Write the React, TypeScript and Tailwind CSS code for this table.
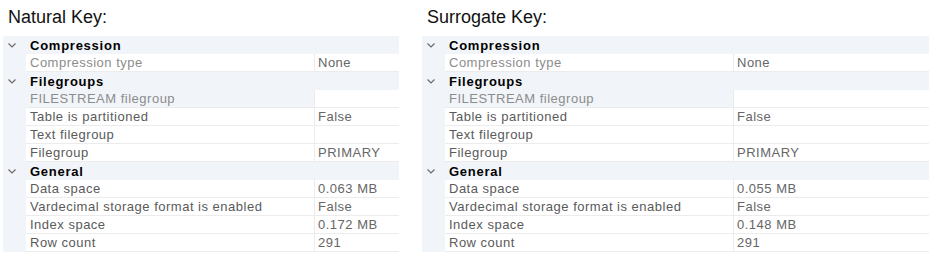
type Prop = { name: string; value?: string; muted?: boolean };
type Category = { title: string; props: Prop[] };

const natural: Category[] = [
  { title: "Compression", props: [{ name: "Compression type", value: "None", muted: true }] },
  {
    title: "Filegroups",
    props: [
      { name: "FILESTREAM filegroup", muted: true },
      { name: "Table is partitioned", value: "False" },
      { name: "Text filegroup" },
      { name: "Filegroup", value: "PRIMARY" },
    ],
  },
  {
    title: "General",
    props: [
      { name: "Data space", value: "0.063 MB" },
      { name: "Vardecimal storage format is enabled", value: "False" },
      { name: "Index space", value: "0.172 MB" },
      { name: "Row count", value: "291" },
    ],
  },
];

const surrogate: Category[] = natural.map((c) => ({
  ...c,
  props: c.props.map((p) =>
    p.name === "Data space"
      ? { ...p, value: "0.055 MB" }
      : p.name === "Index space"
        ? { ...p, value: "0.148 MB" }
        : p
  ),
}));

function Chevron() {
  return (
    <svg width="8" height="5" viewBox="0 0 8 5" className="ml-[5px] mr-[9px] shrink-0">
      <polyline points="0.5,0.5 4,4 7.5,0.5" fill="none" stroke="#6b6b6b" strokeWidth="1.2" />
    </svg>
  );
}

function PropertyGrid({ title, data, width }: { title: string; data: Category[]; width: string }) {
  return (
    <div className={`flex flex-col ${width}`}>
      <div className="h-[33px] pl-[5px] pt-[2px] text-[18px] leading-[24px] text-[#111]">{title}</div>
      <div className="flex flex-col">
        {data.map((cat) => (
          <div key={cat.title} className="flex flex-col">
            <div className="flex h-[18px] items-center bg-[#f1f4f9]">
              <Chevron />
              <span className="pl-[5px] pt-[1px] text-[13px] font-bold tracking-[0.75px] text-black">{cat.title}</span>
            </div>
            {cat.props.map((p) => (
              <div key={p.name} className="flex h-[18px] bg-[#f1f4f9]">
                <div
                  className={`flex w-[288px] ml-[23px] items-center border-b border-[#ececec] pl-[4px] pt-[1px] text-[13px] tracking-[0.5px] ${
                    p.muted ? "text-[#8c8c8c]" : "text-[#5a5a5a]"
                  } ${p.name === "FILESTREAM filegroup" ? "bg-[#f1f4f9]" : "bg-white"}`}
                >
                  <span className="whitespace-nowrap">{p.name}</span>
                </div>
                <div className="flex flex-1 items-center border-b border-l border-[#ececec] bg-white pl-[3px] pt-[1px] text-[13px] tracking-[0.5px] text-[#666]">
                  {p.value}
                </div>
              </div>
            ))}
          </div>
        ))}
      </div>
    </div>
  );
}

export default function App() {
  return (
    <div className="flex h-[269px] w-[933px] bg-white pl-[3px] pt-[3px] font-['Liberation_Sans',Arial,sans-serif]">
      <PropertyGrid title="Natural Key:" data={natural} width="w-[396px]" />
      <div className="w-[23px]" />
      <PropertyGrid title="Surrogate Key:" data={surrogate} width="w-[507px]" />
    </div>
  );
}
